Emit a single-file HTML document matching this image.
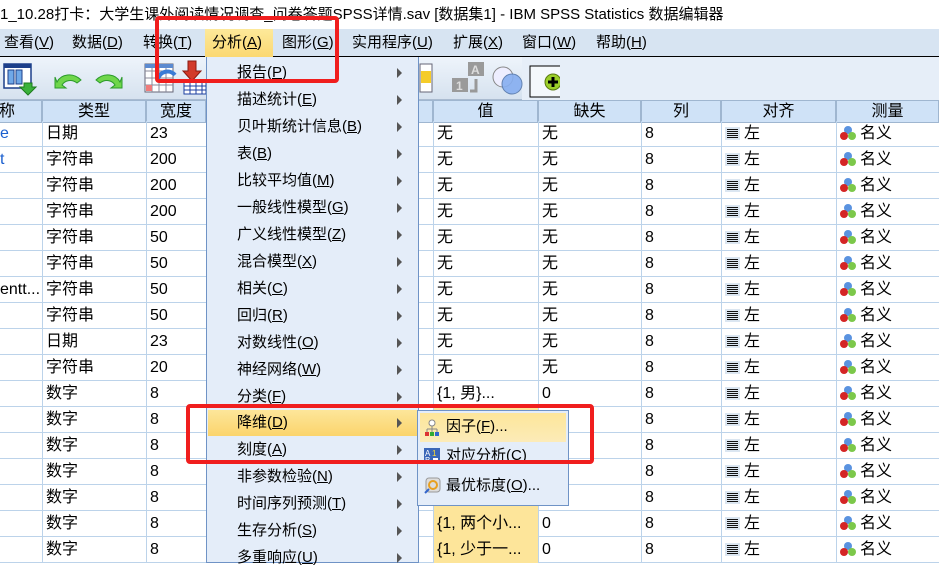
<!DOCTYPE html>
<html><head><meta charset="utf-8"><style>
*{margin:0;padding:0;box-sizing:border-box}
body{width:939px;height:563px;overflow:hidden;position:relative;background:#fff;font-family:"Liberation Sans","Noto Sans CJK SC",sans-serif;font-size:16px;color:#000}
.a{position:absolute}
#title{left:0;top:0;width:939px;height:29px;background:#fff;line-height:29px;font-size:15px;white-space:nowrap}
#menu{left:0;top:29px;width:939px;height:28px;background:#d7e4f2;border-bottom:1px solid #000}
#menu span{position:absolute;top:0;line-height:28px;font-size:15px}
#tb{left:0;top:57px;width:939px;height:43px;background:#e6eef8}
#tbl{left:0;top:57px;width:522px;height:43px;background:linear-gradient(#eef4fb,#d6e2ef);border-bottom:1px solid #aabbd0}
.hd{position:absolute;top:100px;height:23px;background:#cfe2f7;border:1px solid #9fb6d0;text-align:center;line-height:21px;font-size:16px}
.r{position:absolute;left:0;width:939px;height:26px;border-bottom:1px solid #bcd3ea}
.c{position:absolute;top:0;height:26px;line-height:25px;border-left:1px solid #bcd3ea;padding-left:3px;white-space:nowrap;overflow:hidden}
.y{background:#fde59a}
.al{display:inline-block;width:15px;height:13px;background:#dbe6f1;vertical-align:-2px;margin-right:4px;position:relative}
.al:before{content:"";position:absolute;left:2px;top:2px;width:11px;height:9px;background:repeating-linear-gradient(#111 0 1px,transparent 1px 2px)}
.ms{display:inline-block;width:16px;height:14px;position:relative;vertical-align:-2px;margin-right:4px}
.ms i{position:absolute;width:8px;height:8px;border-radius:50%}
#dd{left:206px;top:57px;width:213px;height:506px;background:#e4edf9;border:1px solid #6f93c6;border-top:none}
.mi{position:absolute;left:30px;height:26px;line-height:26px;font-size:15px;white-space:nowrap}
.ar{position:absolute;left:190px;width:0;height:0;border-top:5px solid transparent;border-bottom:5px solid transparent;border-left:5px solid #555}
#sub{left:417px;top:410px;width:152px;height:96px;background:#e4edf9;border:1px solid #6f93c6}
.red{position:absolute;border:4px solid #f01e1e;border-radius:4px}
u{text-decoration:underline}
</style></head><body>
<div id="title" class="a">1_10.28打卡：大学生课外阅读情况调查_问卷答题SPSS详情.sav [数据集1] - IBM SPSS Statistics 数据编辑器</div>
<div id="menu" class="a">
<span style="left:4px">查看(<u>V</u>)</span>
<span style="left:72px">数据(<u>D</u>)</span>
<span style="left:143px">转换(<u>T</u>)</span>
<span style="left:205px;width:68px;height:28px;background:linear-gradient(#fde99a,#fbd872);padding-left:7px">分析(<u>A</u>)</span>
<span style="left:282px">图形(<u>G</u>)</span>
<span style="left:352px">实用程序(<u>U</u>)</span>
<span style="left:453px">扩展(<u>X</u>)</span>
<span style="left:522px">窗口(<u>W</u>)</span>
<span style="left:596px">帮助(<u>H</u>)</span>
</div>
<div id="tb" class="a"></div>
<div id="tbl" class="a"></div>
<svg class="a" style="left:0;top:57px" width="560" height="43">
<rect x="4" y="7" width="27" height="24" fill="#fff" stroke="#1c3f8a" stroke-width="1.5"/><rect x="4" y="7" width="27" height="4" fill="#1c3f8a"/>
<rect x="8" y="13" width="6" height="14" fill="#6fa8e8" stroke="#1c3f8a"/><rect x="16" y="13" width="6" height="14" fill="#6fa8e8" stroke="#1c3f8a"/>
<path d="M24 26h8v4h4l-8 8-8-8h4z" fill="#3bb23b" stroke="#1c7a1c"/>
<path d="M57 25c4-8 16-10 24-2l-4 3c-5-4-12-3-15 2l4 3h-11v-11z" fill="#6fd64a" stroke="#2b9a2b"/>
<path d="M120 25c-4-8-16-10-24-2l4 3c5-4 12-3 15 2l-4 3h11v-11z" fill="#6fd64a" stroke="#2b9a2b"/>
<rect x="145" y="7" width="28" height="28" fill="#fff" stroke="#667"/><path d="M145 14h28M145 21h28M145 28h28M152 7v28M159 7v28M166 7v28" stroke="#889" /><rect x="145" y="7" width="28" height="4" fill="#5b8ad0"/><rect x="146" y="28" width="6" height="6" fill="#ef7b7b"/>
<path d="M158 22c2-8 12-10 17-4" stroke="#3a7bd5" stroke-width="4" fill="none"/>
<path d="M188 4h8v10h5l-9 10-9-10h5z" fill="#d23a2a" stroke="#8a1a10"/><rect x="184" y="25" width="22" height="12" fill="#fff" stroke="#1c3fa0"/><path d="M184 29h22M184 33h22M190 25v12M196 25v12M202 25v12" stroke="#1c3fa0"/>
<rect x="420" y="7" width="12" height="28" fill="#fff" stroke="#667"/><rect x="421" y="14" width="10" height="12" fill="#f5cc2a"/>
<rect x="468" y="5" width="16" height="14" fill="#9a9a9a"/><text x="471" y="17" font-size="12" fill="#ddd" font-weight="bold">A</text>
<rect x="452" y="21" width="16" height="14" fill="#9a9a9a"/><text x="456" y="33" font-size="12" fill="#ddd" font-weight="bold">1</text>
<path d="M476 22v12h-6" stroke="#999" stroke-width="3" fill="none"/>
<circle cx="503" cy="20" r="10" fill="#eef" stroke="#888"/><circle cx="512" cy="27" r="10" fill="#86aef0" stroke="#5577aa" opacity=".9"/>
<rect x="530" y="9" width="31" height="31" fill="#f4f8fc" stroke="#000"/><circle cx="553" cy="25" r="8" fill="#9ccf2a" stroke="#5a7a10"/><path d="M553 20v10M548 25h10" stroke="#000" stroke-width="3"/>
</svg>
<div class="hd" style="left:-2px;width:44px;text-align:left">称</div>
<div class="hd" style="left:42px;width:104px">类型</div>
<div class="hd" style="left:146px;width:60px">宽度</div>
<div class="hd" style="left:418px;width:15px"></div>
<div class="hd" style="left:433px;width:105px">值</div>
<div class="hd" style="left:538px;width:103px">缺失</div>
<div class="hd" style="left:641px;width:80px">列</div>
<div class="hd" style="left:721px;width:115px">对齐</div>
<div class="hd" style="left:836px;width:103px">测量</div>

<div class="r" style="top:121px"><div class="c" style="left:-4px;width:46px;color:#1a5fcf">e</div><div class="c" style="left:42px;width:104px">日期</div><div class="c" style="left:146px;width:60px">23</div><div class="c" style="left:433px;width:105px">无</div><div class="c" style="left:538px;width:103px">无</div><div class="c" style="left:641px;width:80px">8</div><div class="c" style="left:721px;width:115px"><span class="al"></span>左</div><div class="c" style="left:836px;width:103px"><span class="ms"><i style="left:4px;top:0;background:#5a93e0"></i><i style="left:0;top:6px;background:#d42525"></i><i style="left:8px;top:6px;background:#7cc84a"></i></span>名义</div></div>
<div class="r" style="top:147px"><div class="c" style="left:-4px;width:46px;color:#1a5fcf">t</div><div class="c" style="left:42px;width:104px">字符串</div><div class="c" style="left:146px;width:60px">200</div><div class="c" style="left:433px;width:105px">无</div><div class="c" style="left:538px;width:103px">无</div><div class="c" style="left:641px;width:80px">8</div><div class="c" style="left:721px;width:115px"><span class="al"></span>左</div><div class="c" style="left:836px;width:103px"><span class="ms"><i style="left:4px;top:0;background:#5a93e0"></i><i style="left:0;top:6px;background:#d42525"></i><i style="left:8px;top:6px;background:#7cc84a"></i></span>名义</div></div>
<div class="r" style="top:173px"><div class="c" style="left:42px;width:104px">字符串</div><div class="c" style="left:146px;width:60px">200</div><div class="c" style="left:433px;width:105px">无</div><div class="c" style="left:538px;width:103px">无</div><div class="c" style="left:641px;width:80px">8</div><div class="c" style="left:721px;width:115px"><span class="al"></span>左</div><div class="c" style="left:836px;width:103px"><span class="ms"><i style="left:4px;top:0;background:#5a93e0"></i><i style="left:0;top:6px;background:#d42525"></i><i style="left:8px;top:6px;background:#7cc84a"></i></span>名义</div></div>
<div class="r" style="top:199px"><div class="c" style="left:42px;width:104px">字符串</div><div class="c" style="left:146px;width:60px">200</div><div class="c" style="left:433px;width:105px">无</div><div class="c" style="left:538px;width:103px">无</div><div class="c" style="left:641px;width:80px">8</div><div class="c" style="left:721px;width:115px"><span class="al"></span>左</div><div class="c" style="left:836px;width:103px"><span class="ms"><i style="left:4px;top:0;background:#5a93e0"></i><i style="left:0;top:6px;background:#d42525"></i><i style="left:8px;top:6px;background:#7cc84a"></i></span>名义</div></div>
<div class="r" style="top:225px"><div class="c" style="left:42px;width:104px">字符串</div><div class="c" style="left:146px;width:60px">50</div><div class="c" style="left:433px;width:105px">无</div><div class="c" style="left:538px;width:103px">无</div><div class="c" style="left:641px;width:80px">8</div><div class="c" style="left:721px;width:115px"><span class="al"></span>左</div><div class="c" style="left:836px;width:103px"><span class="ms"><i style="left:4px;top:0;background:#5a93e0"></i><i style="left:0;top:6px;background:#d42525"></i><i style="left:8px;top:6px;background:#7cc84a"></i></span>名义</div></div>
<div class="r" style="top:251px"><div class="c" style="left:42px;width:104px">字符串</div><div class="c" style="left:146px;width:60px">50</div><div class="c" style="left:433px;width:105px">无</div><div class="c" style="left:538px;width:103px">无</div><div class="c" style="left:641px;width:80px">8</div><div class="c" style="left:721px;width:115px"><span class="al"></span>左</div><div class="c" style="left:836px;width:103px"><span class="ms"><i style="left:4px;top:0;background:#5a93e0"></i><i style="left:0;top:6px;background:#d42525"></i><i style="left:8px;top:6px;background:#7cc84a"></i></span>名义</div></div>
<div class="r" style="top:277px"><div class="c" style="left:-4px;width:46px">entt...</div><div class="c" style="left:42px;width:104px">字符串</div><div class="c" style="left:146px;width:60px">50</div><div class="c" style="left:433px;width:105px">无</div><div class="c" style="left:538px;width:103px">无</div><div class="c" style="left:641px;width:80px">8</div><div class="c" style="left:721px;width:115px"><span class="al"></span>左</div><div class="c" style="left:836px;width:103px"><span class="ms"><i style="left:4px;top:0;background:#5a93e0"></i><i style="left:0;top:6px;background:#d42525"></i><i style="left:8px;top:6px;background:#7cc84a"></i></span>名义</div></div>
<div class="r" style="top:303px"><div class="c" style="left:42px;width:104px">字符串</div><div class="c" style="left:146px;width:60px">50</div><div class="c" style="left:433px;width:105px">无</div><div class="c" style="left:538px;width:103px">无</div><div class="c" style="left:641px;width:80px">8</div><div class="c" style="left:721px;width:115px"><span class="al"></span>左</div><div class="c" style="left:836px;width:103px"><span class="ms"><i style="left:4px;top:0;background:#5a93e0"></i><i style="left:0;top:6px;background:#d42525"></i><i style="left:8px;top:6px;background:#7cc84a"></i></span>名义</div></div>
<div class="r" style="top:329px"><div class="c" style="left:42px;width:104px">日期</div><div class="c" style="left:146px;width:60px">23</div><div class="c" style="left:433px;width:105px">无</div><div class="c" style="left:538px;width:103px">无</div><div class="c" style="left:641px;width:80px">8</div><div class="c" style="left:721px;width:115px"><span class="al"></span>左</div><div class="c" style="left:836px;width:103px"><span class="ms"><i style="left:4px;top:0;background:#5a93e0"></i><i style="left:0;top:6px;background:#d42525"></i><i style="left:8px;top:6px;background:#7cc84a"></i></span>名义</div></div>
<div class="r" style="top:355px"><div class="c" style="left:42px;width:104px">字符串</div><div class="c" style="left:146px;width:60px">20</div><div class="c" style="left:433px;width:105px">无</div><div class="c" style="left:538px;width:103px">无</div><div class="c" style="left:641px;width:80px">8</div><div class="c" style="left:721px;width:115px"><span class="al"></span>左</div><div class="c" style="left:836px;width:103px"><span class="ms"><i style="left:4px;top:0;background:#5a93e0"></i><i style="left:0;top:6px;background:#d42525"></i><i style="left:8px;top:6px;background:#7cc84a"></i></span>名义</div></div>
<div class="r" style="top:381px"><div class="c" style="left:42px;width:104px">数字</div><div class="c" style="left:146px;width:60px">8</div><div class="c" style="left:433px;width:105px">{1, 男}...</div><div class="c" style="left:538px;width:103px">0</div><div class="c" style="left:641px;width:80px">8</div><div class="c" style="left:721px;width:115px"><span class="al"></span>左</div><div class="c" style="left:836px;width:103px"><span class="ms"><i style="left:4px;top:0;background:#5a93e0"></i><i style="left:0;top:6px;background:#d42525"></i><i style="left:8px;top:6px;background:#7cc84a"></i></span>名义</div></div>
<div class="r" style="top:407px"><div class="c" style="left:42px;width:104px">数字</div><div class="c" style="left:146px;width:60px">8</div><div class="c y" style="left:433px;width:105px"></div><div class="c" style="left:538px;width:103px">0</div><div class="c" style="left:641px;width:80px">8</div><div class="c" style="left:721px;width:115px"><span class="al"></span>左</div><div class="c" style="left:836px;width:103px"><span class="ms"><i style="left:4px;top:0;background:#5a93e0"></i><i style="left:0;top:6px;background:#d42525"></i><i style="left:8px;top:6px;background:#7cc84a"></i></span>名义</div></div>
<div class="r" style="top:433px"><div class="c" style="left:42px;width:104px">数字</div><div class="c" style="left:146px;width:60px">8</div><div class="c y" style="left:433px;width:105px"></div><div class="c" style="left:538px;width:103px">0</div><div class="c" style="left:641px;width:80px">8</div><div class="c" style="left:721px;width:115px"><span class="al"></span>左</div><div class="c" style="left:836px;width:103px"><span class="ms"><i style="left:4px;top:0;background:#5a93e0"></i><i style="left:0;top:6px;background:#d42525"></i><i style="left:8px;top:6px;background:#7cc84a"></i></span>名义</div></div>
<div class="r" style="top:459px"><div class="c" style="left:42px;width:104px">数字</div><div class="c" style="left:146px;width:60px">8</div><div class="c y" style="left:433px;width:105px"></div><div class="c" style="left:538px;width:103px">0</div><div class="c" style="left:641px;width:80px">8</div><div class="c" style="left:721px;width:115px"><span class="al"></span>左</div><div class="c" style="left:836px;width:103px"><span class="ms"><i style="left:4px;top:0;background:#5a93e0"></i><i style="left:0;top:6px;background:#d42525"></i><i style="left:8px;top:6px;background:#7cc84a"></i></span>名义</div></div>
<div class="r" style="top:485px"><div class="c" style="left:42px;width:104px">数字</div><div class="c" style="left:146px;width:60px">8</div><div class="c y" style="left:433px;width:105px">{1, 一本}...</div><div class="c" style="left:538px;width:103px">0</div><div class="c" style="left:641px;width:80px">8</div><div class="c" style="left:721px;width:115px"><span class="al"></span>左</div><div class="c" style="left:836px;width:103px"><span class="ms"><i style="left:4px;top:0;background:#5a93e0"></i><i style="left:0;top:6px;background:#d42525"></i><i style="left:8px;top:6px;background:#7cc84a"></i></span>名义</div></div>
<div class="r" style="top:511px"><div class="c" style="left:42px;width:104px">数字</div><div class="c" style="left:146px;width:60px">8</div><div class="c y" style="left:433px;width:105px">{1, 两个小...</div><div class="c" style="left:538px;width:103px">0</div><div class="c" style="left:641px;width:80px">8</div><div class="c" style="left:721px;width:115px"><span class="al"></span>左</div><div class="c" style="left:836px;width:103px"><span class="ms"><i style="left:4px;top:0;background:#5a93e0"></i><i style="left:0;top:6px;background:#d42525"></i><i style="left:8px;top:6px;background:#7cc84a"></i></span>名义</div></div>
<div class="r" style="top:537px"><div class="c" style="left:42px;width:104px">数字</div><div class="c" style="left:146px;width:60px">8</div><div class="c y" style="left:433px;width:105px">{1, 少于一...</div><div class="c" style="left:538px;width:103px">0</div><div class="c" style="left:641px;width:80px">8</div><div class="c" style="left:721px;width:115px"><span class="al"></span>左</div><div class="c" style="left:836px;width:103px"><span class="ms"><i style="left:4px;top:0;background:#5a93e0"></i><i style="left:0;top:6px;background:#d42525"></i><i style="left:8px;top:6px;background:#7cc84a"></i></span>名义</div></div>

<div id="dd" class="a">
<div style="position:absolute;left:1px;top:353px;width:211px;height:26px;background:linear-gradient(#fde69a,#fbd46c)"></div>
<div class="mi" style="top:3px">报告(<u>P</u>)</div><div class="ar" style="top:11px"></div>
<div class="mi" style="top:30px">描述统计(<u>E</u>)</div><div class="ar" style="top:38px"></div>
<div class="mi" style="top:57px">贝叶斯统计信息(<u>B</u>)</div><div class="ar" style="top:65px"></div>
<div class="mi" style="top:84px">表(<u>B</u>)</div><div class="ar" style="top:92px"></div>
<div class="mi" style="top:111px">比较平均值(<u>M</u>)</div><div class="ar" style="top:119px"></div>
<div class="mi" style="top:138px">一般线性模型(<u>G</u>)</div><div class="ar" style="top:146px"></div>
<div class="mi" style="top:165px">广义线性模型(<u>Z</u>)</div><div class="ar" style="top:173px"></div>
<div class="mi" style="top:192px">混合模型(<u>X</u>)</div><div class="ar" style="top:200px"></div>
<div class="mi" style="top:219px">相关(<u>C</u>)</div><div class="ar" style="top:227px"></div>
<div class="mi" style="top:246px">回归(<u>R</u>)</div><div class="ar" style="top:254px"></div>
<div class="mi" style="top:273px">对数线性(<u>O</u>)</div><div class="ar" style="top:281px"></div>
<div class="mi" style="top:300px">神经网络(<u>W</u>)</div><div class="ar" style="top:308px"></div>
<div class="mi" style="top:327px">分类(<u>F</u>)</div><div class="ar" style="top:335px"></div>
<div class="mi" style="top:353px">降维(<u>D</u>)</div><div class="ar" style="top:361px"></div>
<div class="mi" style="top:380px">刻度(<u>A</u>)</div><div class="ar" style="top:388px"></div>
<div class="mi" style="top:407px">非参数检验(<u>N</u>)</div><div class="ar" style="top:415px"></div>
<div class="mi" style="top:434px">时间序列预测(<u>T</u>)</div><div class="ar" style="top:442px"></div>
<div class="mi" style="top:461px">生存分析(<u>S</u>)</div><div class="ar" style="top:469px"></div>
<div class="mi" style="top:488px">多重响应(<u>U</u>)</div><div class="ar" style="top:496px"></div>
</div>
<div id="sub" class="a">
<div style="position:absolute;left:2px;top:2px;width:146px;height:29px;background:linear-gradient(#fde69a,#fcebb8)"></div>
<svg style="position:absolute;left:6px;top:8px" width="16" height="18"><circle cx="8" cy="4" r="3" fill="#fff" stroke="#888"/><path d="M8 7v3M3 10h10M3 10v3M8 10v3M13 10v3" stroke="#888"/><rect x="1" y="13" width="4" height="4" fill="#d33"/><rect x="6" y="13" width="4" height="4" fill="#3a3"/><rect x="11" y="13" width="4" height="4" fill="#36c"/></svg>
<div class="mi" style="left:28px;top:3px">因子(<u>F</u>)...</div>
<svg style="position:absolute;left:6px;top:37px" width="16" height="16"><rect width="16" height="16" fill="#3a66b8"/><text x="1" y="8" font-size="8" fill="#fff">A</text><text x="8" y="8" font-size="8" fill="#fd3">1</text><text x="1" y="15" font-size="8" fill="#fff">B</text><rect x="9" y="10" width="5" height="5" fill="#fff"/></svg>
<div class="mi" style="left:28px;top:32px">对应分析(<u>C</u>)</div>
<svg style="position:absolute;left:6px;top:66px" width="17" height="17"><rect x="2" y="1" width="14" height="14" rx="3" fill="#ddd" stroke="#999"/><circle cx="9" cy="8" r="4" fill="none" stroke="#e8a020" stroke-width="2"/><path d="M1 16l4-4" stroke="#36c" stroke-width="2"/></svg>
<div class="mi" style="left:28px;top:62px">最优标度(<u>O</u>)...</div>
</div>
<div class="red" style="left:155px;top:16px;width:184px;height:67px"></div>
<div class="red" style="left:186px;top:404px;width:408px;height:60px"></div>
</body></html>
